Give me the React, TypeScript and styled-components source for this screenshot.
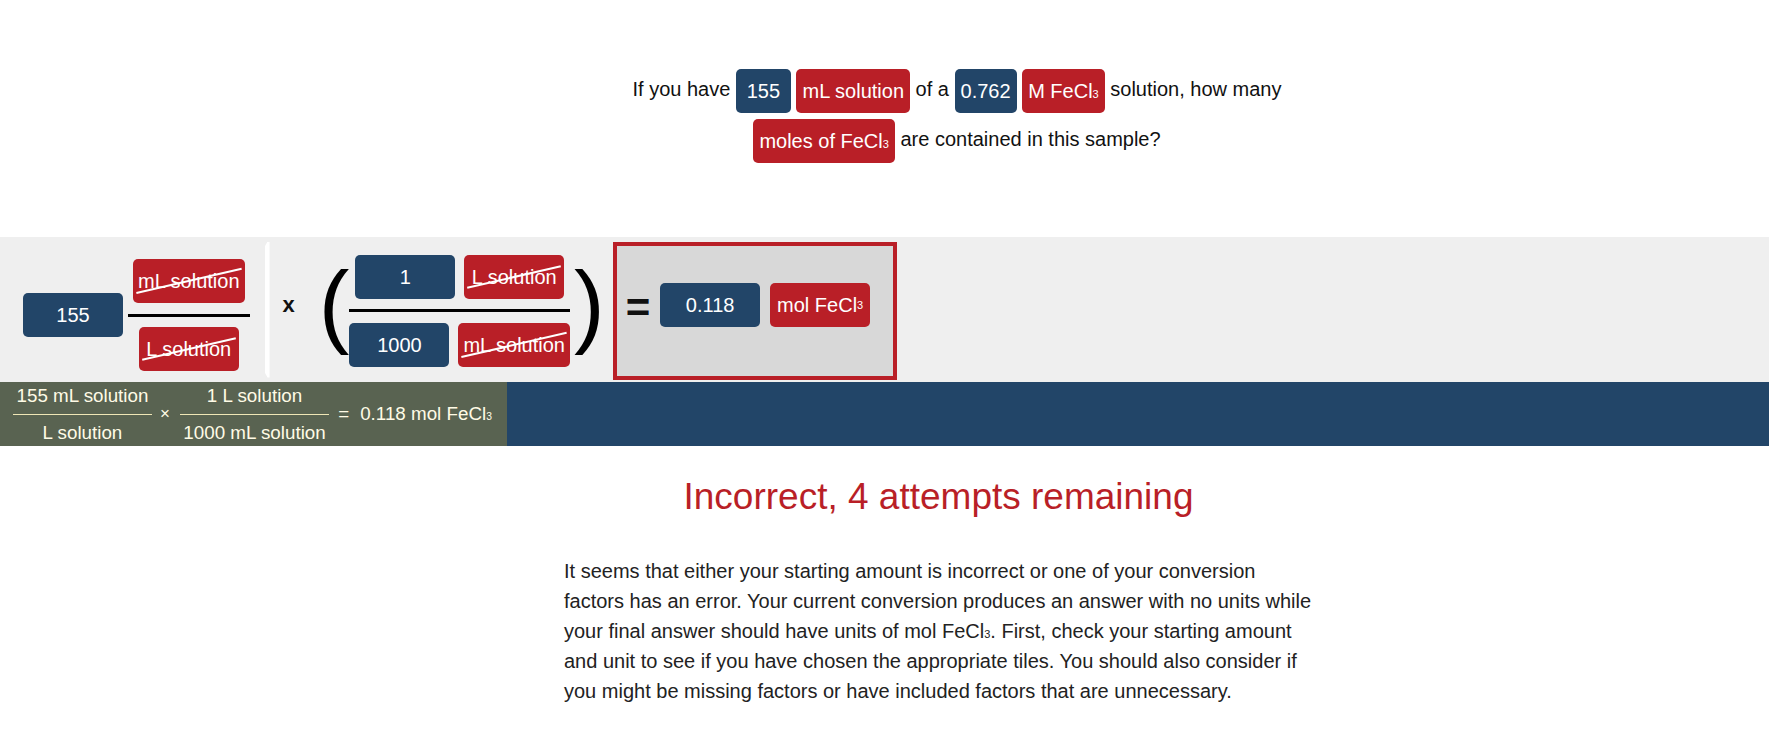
import React from "react";
import styled, { createGlobalStyle } from "styled-components";

const NAVY = "#224568";
const RED = "#b91f27";

const GlobalStyle = createGlobalStyle`
  html, body {
    margin: 0;
    padding: 0;
    background: #ffffff;
  }
  body {
    font-family: "Liberation Sans", Arial, Helvetica, sans-serif;
    color: #111111;
  }
`;

const Page = styled.main`
  width: 1769px;
  display: flex;
  flex-direction: column;
`;

/* ---------- question ---------- */

const Question = styled.p`
  margin: 64px 0 0 582px;
  width: 750px;
  text-align: center;
  font-size: 20px;
  line-height: 50px;
  color: #111111;
`;

const QTile = styled.span<{ $kind: "num" | "unit" }>`
  display: inline-block;
  vertical-align: middle;
  box-sizing: border-box;
  height: 44px;
  line-height: 44px;
  min-width: 55px;
  padding: 0 6px;
  border-radius: 5px;
  text-align: center;
  color: #ffffff;
  background: ${(p) => (p.$kind === "num" ? NAVY : RED)};
`;

const Sub = styled.span`
  font-size: 0.55em;
  line-height: 1;
  vertical-align: baseline;
`;

/* ---------- workspace band ---------- */

const Band = styled.section`
  margin-top: 73px;
  height: 145px;
  box-sizing: border-box;
  padding-left: 23px;
  background: #efefef;
  display: flex;
  align-items: center;
`;

const StartGroup = styled.div`
  display: flex;
  align-items: center;
  gap: 5px;
  margin-top: 11px;
`;

const Tile = styled.div<{ $kind: "num" | "unit"; $struck?: boolean }>`
  position: relative;
  box-sizing: border-box;
  height: 44px;
  min-width: 100px;
  padding: 0 5px;
  border-radius: 5px;
  display: flex;
  align-items: center;
  justify-content: center;
  font-size: 20px;
  color: #ffffff;
  white-space: nowrap;
  background: ${(p) => (p.$kind === "num" ? NAVY : RED)};

  &::after {
    content: "";
    display: ${(p) => (p.$struck ? "block" : "none")};
    position: absolute;
    left: 2px;
    right: 2px;
    top: calc(50% - 1px);
    height: 2px;
    background: #ffffff;
    transform: rotate(-13deg);
  }
`;

const Fraction = styled.div<{ $shift: number }>`
  display: flex;
  flex-direction: column;
  align-items: center;
  margin-top: ${(p) => p.$shift}px;
`;

const FracRow = styled.div<{ $pad: number }>`
  display: flex;
  gap: 9px;
  padding: 0 ${(p) => p.$pad}px;
`;

const FracBar = styled.div<{ $above: number; $below: number }>`
  align-self: stretch;
  height: 3px;
  background: #000000;
  margin: ${(p) => p.$above}px 0 ${(p) => p.$below}px;
`;

const Divider = styled.div`
  width: 5px;
  height: 136px;
  margin-left: 15px;
  background: #ffffff;
  clip-path: polygon(60% 0, 100% 0, 100% 100%, 60% 100%, 0 96%, 0 4%);
`;

const Times = styled.span`
  margin: 0 0 9px 13px;
  font-size: 22px;
  font-weight: bold;
  line-height: 22px;
  color: #111111;
`;

const Paren = styled.span<{ $gap: number }>`
  margin-left: ${(p) => p.$gap}px;
  font-size: 92px;
  line-height: 92px;
  color: #000000;
  transform: translateY(-6.5px);
`;

const AnswerBox = styled.div`
  margin: 3px 0 0 8px;
  width: 284px;
  height: 138px;
  box-sizing: border-box;
  border: 4px solid ${RED};
  background: #d8d8d8;
  display: flex;
  align-items: center;
  gap: 10px;
  padding: 0 0 12px 9px;
`;

const Equals = styled.span`
  margin: 5px 0 0 0;
  font-size: 42px;
  font-weight: bold;
  line-height: 42px;
  color: #111111;
`;

/* ---------- summary bar ---------- */

const Summary = styled.section`
  display: flex;
  height: 64px;
`;

const SummaryWork = styled.div`
  display: flex;
  align-items: center;
  padding: 0 15px 0 13px;
  background: #596351;
  color: #fffbe6;
  font-size: 18.8px;
  white-space: nowrap;
`;

const SummaryRest = styled.div`
  flex: 1;
  background: ${NAVY};
`;

const SumFrac = styled.div`
  display: flex;
  flex-direction: column;
  align-items: center;
`;

const SumPart = styled.span`
  line-height: 24px;
  padding: 0 3.5px;
`;

const SumBar = styled.div`
  align-self: stretch;
  height: 1px;
  margin: 6px 0;
  background: #efe6b6;
`;

const SumOp = styled.span<{ $size: number; $left: number; $right: number }>`
  font-size: ${(p) => p.$size}px;
  line-height: 24px;
  margin: 0 ${(p) => p.$right}px 0 ${(p) => p.$left}px;
`;

const SumResult = styled.span`
  line-height: 24px;
`;

/* ---------- feedback ---------- */

const Feedback = styled.section`
  margin-left: 564px;
  width: 754px;
`;

const Verdict = styled.h2`
  margin: 29px 5px 0 0;
  font-size: 37px;
  line-height: 44px;
  font-weight: normal;
  text-align: center;
  color: ${RED};
`;

const Advice = styled.p`
  margin: 37px 0 0;
  font-size: 20px;
  line-height: 30px;
  color: #222222;
`;

export default function App() {
  return (
    <>
      <GlobalStyle />
      <Page>
        <Question>
          If you have <QTile $kind="num">155</QTile>{" "}
          <QTile $kind="unit">mL solution</QTile> of a{" "}
          <QTile $kind="num">0.762</QTile>{" "}
          <QTile $kind="unit">
            M FeCl<Sub>3</Sub>
          </QTile>{" "}
          solution, how many{" "}
          <QTile $kind="unit">
            moles of FeCl<Sub>3</Sub>
          </QTile>{" "}
          are contained in this sample?
        </Question>

        <Band>
          <StartGroup>
            <Tile $kind="num">155</Tile>
            <Fraction $shift={0}>
              <FracRow $pad={5}>
                <Tile $kind="unit" $struck>
                  mL solution
                </Tile>
              </FracRow>
              <FracBar $above={11} $below={10} />
              <FracRow $pad={5}>
                <Tile $kind="unit" $struck>
                  L solution
                </Tile>
              </FracRow>
            </Fraction>
          </StartGroup>

          <Divider />
          <Times>x</Times>

          <Paren $gap={24}>(</Paren>
          <Fraction $shift={3}>
            <FracRow $pad={0}>
              <Tile $kind="num">1</Tile>
              <Tile $kind="unit" $struck>
                L solution
              </Tile>
            </FracRow>
            <FracBar $above={10} $below={11} />
            <FracRow $pad={0}>
              <Tile $kind="num">1000</Tile>
              <Tile $kind="unit" $struck>
                mL solution
              </Tile>
            </FracRow>
          </Fraction>
          <Paren $gap={4}>)</Paren>

          <AnswerBox>
            <Equals>=</Equals>
            <Tile $kind="num">0.118</Tile>
            <Tile $kind="unit">
              mol FeCl<Sub>3</Sub>
            </Tile>
          </AnswerBox>
        </Band>

        <Summary>
          <SummaryWork>
            <SumFrac>
              <SumPart>155 mL solution</SumPart>
              <SumBar />
              <SumPart>L solution</SumPart>
            </SumFrac>
            <SumOp $size={17} $left={8} $right={10}>
              ×
            </SumOp>
            <SumFrac>
              <SumPart>1 L solution</SumPart>
              <SumBar />
              <SumPart>1000 mL solution</SumPart>
            </SumFrac>
            <SumOp $size={18.8} $left={9} $right={11}>
              =
            </SumOp>
            <SumResult>
              0.118 mol FeCl<Sub>3</Sub>
            </SumResult>
          </SummaryWork>
          <SummaryRest />
        </Summary>

        <Feedback>
          <Verdict>Incorrect, 4 attempts remaining</Verdict>
          <Advice>
            It seems that either your starting amount is incorrect or one of
            your conversion factors has an error. Your current conversion
            produces an answer with no units while your final answer should
            have units of mol FeCl<Sub>3</Sub>. First, check your starting
            amount and unit to see if you have chosen the appropriate tiles.
            You should also consider if you might be missing factors or have
            included factors that are unnecessary.
          </Advice>
        </Feedback>
      </Page>
    </>
  );
}
